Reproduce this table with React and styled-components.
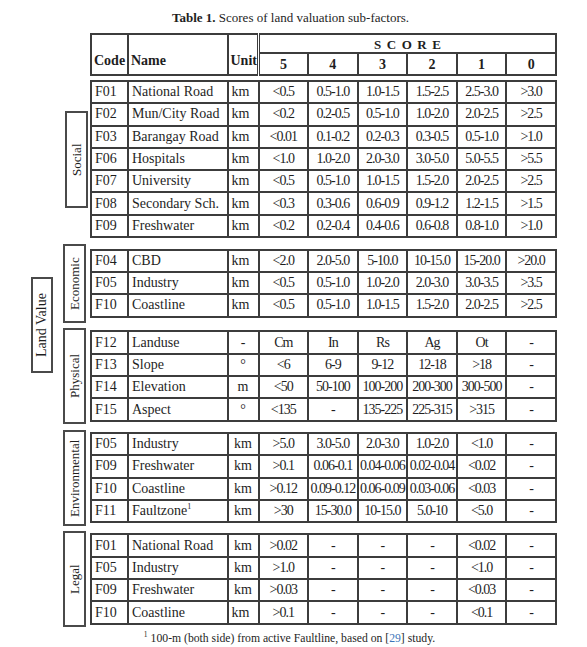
import React from 'react';
import styled, { createGlobalStyle } from 'styled-components';

const GlobalStyle = createGlobalStyle`
    body{
        margin:0;
        background:#fff;
        font-family:"Liberation Serif", "Times New Roman", serif;
        color:#1e1e1e;
    }
`;

const Page = styled.div`
    width:587px;
    height:647px;
    overflow:hidden;
`;

const Title = styled.p`
    margin:10px 0 0;
    padding-right:6px;
    font-size:13px;
    line-height:16px;
    text-align:center;
    b{ font-weight:bold; }
`;

const Main = styled.div`
    display:flex;
    margin-top:7px;
`;

const LandCol = styled.div`
    width:22px;
    margin-left:31px;
    padding-top:244px;
`;

const Stack = styled.div`
    display:flex;
    flex-direction:column;
    gap:5.5px;
    margin-left:10px;
`;

const HeadRow = styled.div`
    padding-left:27px;
    margin-bottom:-1.5px;
`;

const Group = styled.div`
    display:grid;
    grid-template-columns:27px auto;
    align-items:center;
`;

const SideBox = styled.div`
    box-sizing:border-box;
    width:${p => p.$w || 23}px;
    height:${p => p.$h}px;
    margin-left:${p => p.$shift || 0}px;
    border:2px solid #4a4a4a;
    display:flex;
    align-items:center;
    justify-content:center;
    writing-mode:vertical-rl;
    transform:rotate(180deg);
    font-family:"Liberation Serif", serif;
    font-size:${p => p.$size || 13}px;
    white-space:nowrap;
`;

const Table = styled.table`
    border-collapse:collapse;
    table-layout:fixed;
    width:465px;
    font-family:"Liberation Serif", "Times New Roman", serif;
    font-size:14px;
    color:#1e1e1e;
    td, th{
        border:2px solid #3c3c3c;
        padding:0;
        overflow:visible;
        white-space:nowrap;
        line-height:16px;
    }
    tbody tr{ height:22.3px; }
`;

const TopRow = styled.tr`
    height:${p => p.$h}px;
`;

const HeadCell = styled.th`
    text-align:left;
    vertical-align:bottom;
    padding:0 0 5px 2px !important;
    font-weight:bold;
    &.unit{
        border-right:3px double #3c3c3c !important;
    }
`;

const ScoreHead = styled.th`
    font-size:13px;
    line-height:14px !important;
    letter-spacing:5.5px;
    padding:3px 0 0 5.5px !important;
    text-align:center;
    vertical-align:middle;
`;

const NumHead = styled.th`
    text-align:center;
    padding-top:2px !important;
    font-weight:bold;
`;

const Code = styled.td`
    padding-left:3px !important;
`;

const Name = styled.td`
    padding-left:3px !important;
    sup{ font-size:8px; line-height:0; vertical-align:6px; }
`;

const Unit = styled.td`
    text-align:${p => (p.$center ? 'center' : 'left')};
    padding-left:${p => (p.$center ? 0 : 3)}px !important;
`;

const Score = styled.td`
    text-align:center;
    letter-spacing:-1px;
`;

const Footnote = styled.p`
    margin:5px 0 0;
    padding-right:8px;
    font-size:11.7px;
    line-height:14px;
    text-align:center;
    sup{ font-size:7.5px; vertical-align:5px; line-height:0; margin-right:3px; }
    span{ color:#3a74b8; }
`;

const groups = [
    { label: 'Social', h: 97, shift: 2, rows: [
        ['F01', 'National Road', 'km', '<0.5', '0.5-1.0', '1.0-1.5', '1.5-2.5', '2.5-3.0', '>3.0'],
        ['F02', 'Mun/City Road', 'km', '<0.2', '0.2-0.5', '0.5-1.0', '1.0-2.0', '2.0-2.5', '>2.5'],
        ['F03', 'Barangay Road', 'km', '<0.01', '0.1-0.2', '0.2-0.3', '0.3-0.5', '0.5-1.0', '>1.0'],
        ['F06', 'Hospitals', 'km', '<1.0', '1.0-2.0', '2.0-3.0', '3.0-5.0', '5.0-5.5', '>5.5'],
        ['F07', 'University', 'km', '<0.5', '0.5-1.0', '1.0-1.5', '1.5-2.0', '2.0-2.5', '>2.5'],
        ['F08', 'Secondary Sch.', 'km', '<0.3', '0.3-0.6', '0.6-0.9', '0.9-1.2', '1.2-1.5', '>1.5'],
        ['F09', 'Freshwater', 'km', '<0.2', '0.2-0.4', '0.4-0.6', '0.6-0.8', '0.8-1.0', '>1.0'],
    ] },
    { label: 'Economic', h: 79, rows: [
        ['F04', 'CBD', 'km', '<2.0', '2.0-5.0', '5-10.0', '10-15.0', '15-20.0', '>20.0'],
        ['F05', 'Industry', 'km', '<0.5', '0.5-1.0', '1.0-2.0', '2.0-3.0', '3.0-3.5', '>3.5'],
        ['F10', 'Coastline', 'km', '<0.5', '0.5-1.0', '1.0-1.5', '1.5-2.0', '2.0-2.5', '>2.5'],
    ] },
    { label: 'Physical', h: 96, center: true, rows: [
        ['F12', 'Landuse', '-', 'Cm', 'In', 'Rs', 'Ag', 'Ot', '-'],
        ['F13', 'Slope', '°', '<6', '6-9', '9-12', '12-18', '>18', '-'],
        ['F14', 'Elevation', 'm', '<50', '50-100', '100-200', '200-300', '300-500', '-'],
        ['F15', 'Aspect', '°', '<135', '-', '135-225', '225-315', '>315', '-'],
    ] },
    { label: 'Environmental', h: 96, center: true, rows: [
        ['F05', 'Industry', 'km', '>5.0', '3.0-5.0', '2.0-3.0', '1.0-2.0', '<1.0', '-'],
        ['F09', 'Freshwater', 'km', '>0.1', '0.06-0.1', '0.04-0.06', '0.02-0.04', '<0.02', '-'],
        ['F10', 'Coastline', 'km', '>0.12', '0.09-0.12', '0.06-0.09', '0.03-0.06', '<0.03', '-'],
        ['F11', 'Faultzone', 'km', '>30', '15-30.0', '10-15.0', '5.0-10', '<5.0', '-', 'note'],
    ] },
    { label: 'Legal', h: 96, center: true, rows: [
        ['F01', 'National Road', 'km', '>0.02', '-', '-', '-', '<0.02', '-'],
        ['F05', 'Industry', 'km', '>1.0', '-', '-', '-', '<1.0', '-'],
        ['F09', 'Freshwater', 'km', '>0.03', '-', '-', '-', '<0.03', '-'],
        ['F10', 'Coastline', 'km', '>0.1', '-', '-', '-', '<0.1', '-', 'left'],
    ] },
];

const Cols = () => (
    <colgroup>
        <col style={{ width: 37 }} />
        <col style={{ width: 99.5 }} />
        <col style={{ width: 31 }} />
        {[0, 1, 2, 3, 4, 5].map(i => <col key={i} style={{ width: 49.58 }} />)}
    </colgroup>
);

const DataTable = ({ rows, center }) => (
    <Table>
        <Cols />
        <tbody>
            {rows.map((r) => (
                <tr key={r[0] + r[1]}>
                    <Code>{r[0]}</Code>
                    <Name>{r[1]}{r[9] === 'note' && <sup>1</sup>}</Name>
                    <Unit $center={center && r[9] !== 'left'}>{r[2]}</Unit>
                    {r.slice(3, 9).map((v, i) => <Score key={i}>{v}</Score>)}
                </tr>
            ))}
        </tbody>
    </Table>
);

const App = () => {
    return (
        <Page>
            <GlobalStyle />
            <Title><b>Table 1.</b> Scores of land valuation sub-factors.</Title>
            <Main>
                <LandCol>
                    <SideBox $w={22} $h={96} $size={14}>Land Value</SideBox>
                </LandCol>
                <Stack>
                    <HeadRow>
                        <Table>
                            <Cols />
                            <thead>
                                <TopRow $h={19}>
                                    <HeadCell rowSpan={2}>Code</HeadCell>
                                    <HeadCell rowSpan={2}>Name</HeadCell>
                                    <HeadCell rowSpan={2} className="unit">Unit</HeadCell>
                                    <ScoreHead colSpan={6}>SCORE</ScoreHead>
                                </TopRow>
                                <TopRow $h={22}>
                                    {[5, 4, 3, 2, 1, 0].map(n => <NumHead key={n}>{n}</NumHead>)}
                                </TopRow>
                            </thead>
                        </Table>
                    </HeadRow>
                    {groups.map(g => (
                        <Group key={g.label}>
                            <SideBox $h={g.h} $shift={g.shift}>{g.label}</SideBox>
                            <DataTable rows={g.rows} center={g.center} />
                        </Group>
                    ))}
                </Stack>
            </Main>
            <Footnote><sup>1</sup>100-m (both side) from active Faultline, based on [<span>29</span>] study.</Footnote>
        </Page>
    );
};

export default App;
